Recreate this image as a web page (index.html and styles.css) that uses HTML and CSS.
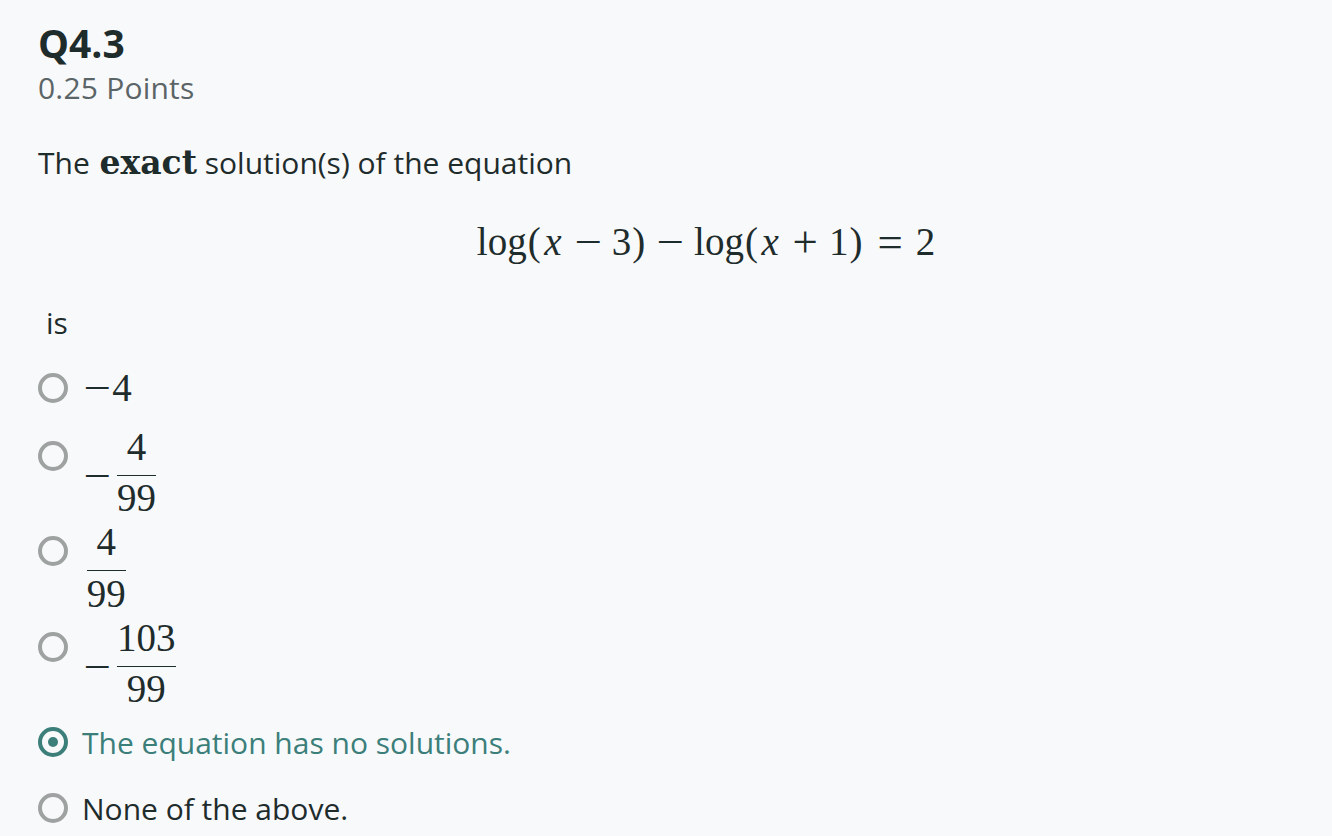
FILE: index.html
```html
<!DOCTYPE html>
<html>
<head>
<meta charset="utf-8">
<link rel="stylesheet" href="styles.css">
</head>
<body>
<div class="page">
  <h2 class="qtitle">Q4.3</h2>
  <div class="points">0.25 Points</div>
  <p class="prompt">The <span class="bf">exact</span> solution(s) of the equation</p>
  <div class="equation math"><span class="op-name">log</span><span class="p">(</span><i class="v">x</i><span class="bin minus">−</span><span class="d">3</span><span class="p">)</span><span class="bin minus">−</span><span class="op-name">log</span><span class="p">(</span><i class="v">x</i><span class="bin plus">+</span><span class="d">1</span><span class="p">)</span><span class="rel plus">=</span><span class="d">2</span></div>
  <p class="is">is</p>
  <div class="options">
    <div class="opt opt-text">
      <span class="radio"></span>
      <span class="label math line"><span class="op minus">−</span>4</span>
    </div>
    <div class="opt opt-frac">
      <span class="radio"></span>
      <span class="label math fracrow"><span class="op minus neg">−</span><span class="frac"><span class="num">4</span><span class="den">99</span></span></span>
    </div>
    <div class="opt opt-frac">
      <span class="radio"></span>
      <span class="label math fracrow"><span class="frac"><span class="num">4</span><span class="den">99</span></span></span>
    </div>
    <div class="opt opt-frac">
      <span class="radio"></span>
      <span class="label math fracrow"><span class="op minus neg">−</span><span class="frac"><span class="num">103</span><span class="den">99</span></span></span>
    </div>
    <div class="opt opt-text selected">
      <span class="radio"></span>
      <span class="label txt">The equation has no solutions.</span>
    </div>
    <div class="opt opt-text">
      <span class="radio"></span>
      <span class="label txt">None of the above.</span>
    </div>
  </div>
</div>
</body>
</html>
```

FILE: styles.css
```css
html, body {
  margin: 0;
  padding: 0;
  background: #f8f9fb;
}
body {
  font-family: "Open Sans", Lato, sans-serif;
  color: #1f2c2c;
  overflow: hidden;
}
.page {
  padding: 20px 0 0 38px;
}
.qtitle {
  margin: 0;
  font-size: 39px;
  line-height: 46px;
  font-weight: 700;
  color: #1f2c2c;
}
.points {
  margin-top: 4.4px;
  font-size: 30px;
  line-height: 36px;
  color: #5b6567;
  letter-spacing: 0.2px;
}
.prompt {
  margin: 37px 0 0 0;
  font-size: 30px;
  line-height: 40px;
}
.bf {
  font-family: "DejaVu Serif", serif;
  font-weight: 700;
  font-size: 33px;
  line-height: 0;
  margin-left: 2px;
}
.math {
  font-family: "Liberation Serif", "Times New Roman", serif;
  color: #1f2c2c;
}
.equation {
  margin-top: 33.4px;
  padding-left: 42px;
  text-align: center;
  font-size: 39px;
  line-height: 50px;
  white-space: nowrap;
}
.op-name, .p, .v, .d, .bin, .rel, .op {
  display: inline-block;
  text-align: center;
}
.p { width: 0.389em; }
.v { width: 0.572em; font-style: italic; }
.d { width: 0.5em; }
.bin, .op { width: 0.778em; }
.bin { margin: 0 0.222em; }
.rel { width: 0.778em; margin: 0 0.278em; }
.minus {
  transform: scaleX(1.25);
}
.plus {
  transform: scale(1.15);
}
.is {
  margin: 36.6px 0 0 8px;
  font-size: 30px;
  line-height: 40px;
}
.options {
  margin-top: 22.6px;
  display: flex;
  flex-direction: column;
}
.opt {
  display: flex;
  align-items: flex-start;
  gap: 14px;
}
.opt-text {
  margin-bottom: 24px;
}
.opt-text.selected {
  margin-bottom: 22px;
}
.opt-frac {
  margin-bottom: 18px;
}
.radio {
  flex: none;
  width: 30px;
  height: 30px;
  box-sizing: border-box;
  border: 4px solid #9ea3a2;
  border-radius: 50%;
  margin-top: 7px;
  display: flex;
  align-items: center;
  justify-content: center;
}
.selected .radio {
  border-color: #3c7f7a;
}
.selected .radio::after {
  content: "";
  width: 10px;
  height: 10px;
  border-radius: 50%;
  background: #3c7f7a;
}
.label {
  display: block;
}
.line {
  font-size: 39px;
  line-height: 44px;
}
.txt {
  font-size: 30px;
  line-height: 44px;
  position: relative;
  top: 1px;
}
.selected .txt {
  color: #3c7f7a;
}
.fracrow {
  display: flex;
  align-items: center;
  font-size: 39px;
}
.neg {
  line-height: 26px;
  margin-top: 7px;
}
.frac {
  display: flex;
  flex-direction: column;
  align-items: center;
  padding: 0 0.12em;
}
.num {
  line-height: 26px;
  padding: 0 0 15px;
  border-bottom: 1.5px solid #1f2c2c;
  align-self: stretch;
  text-align: center;
}
.den {
  line-height: 26px;
  padding-top: 9.3px;
}
```
